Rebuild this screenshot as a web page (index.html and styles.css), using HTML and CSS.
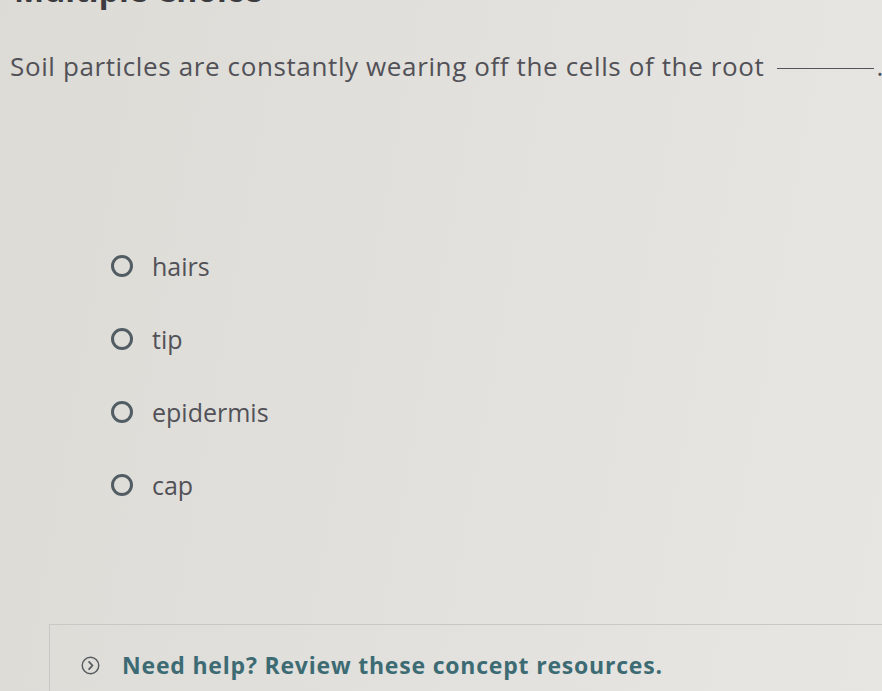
FILE: index.html
```html
<!DOCTYPE html>
<html>
<head>
<meta charset="utf-8">
<link rel="stylesheet" href="styles.css">
</head>
<body>
<div class="page">
  <div class="title">Multiple Choice</div>
  <p class="question">Soil particles are constantly wearing off the cells of the root<span class="blank"></span>.</p>
  <ul class="options">
    <li class="option"><span class="radio"></span><span class="label">hairs</span></li>
    <li class="option"><span class="radio"></span><span class="label">tip</span></li>
    <li class="option"><span class="radio"></span><span class="label">epidermis</span></li>
    <li class="option"><span class="radio"></span><span class="label">cap</span></li>
  </ul>
  <div class="help">
    <svg class="help-icon" viewBox="0 0 20 20" width="19" height="19">
      <circle cx="10" cy="10" r="8.7" fill="none" stroke="#555a5e" stroke-width="1.5"/>
      <path d="M8.5 6.2 L12.1 10 L8.5 13.8" fill="none" stroke="#555a5e" stroke-width="1.9" stroke-linecap="round" stroke-linejoin="round"/>
    </svg>
    <span class="help-text">Need help? Review these concept resources.</span>
  </div>
</div>
</body>
</html>
```
FILE: styles.css
```css
html, body {
  margin: 0;
  padding: 0;
}
body {
  background: #e2e1dd;
  font-family: "Open Sans", "Liberation Sans", sans-serif;
  color: #525157;
  overflow: hidden;
}
.page {
  width: 882px;
  height: 691px;
  position: relative;
  overflow: hidden;
  background: linear-gradient(100deg, #dcdbd6 0%, #e2e1dd 55%, #e7e6e3 100%);
}
.title {
  font-size: 32px;
  font-weight: 700;
  color: #3b3b40;
  margin: -29px 0 0 14px;
  height: 38px;
  line-height: 38px;
}
.question {
  margin: 40px 0 0 10px;
  font-size: 26px;
  line-height: 34px;
  letter-spacing: 0.62px;
  white-space: nowrap;
}
.blank {
  display: inline-block;
  width: 97px;
  border-bottom: 1.5px solid #55545a;
  margin-left: 13px;
  margin-right: 2px;
  vertical-align: 7px;
}
.options {
  list-style: none;
  margin: 0;
  padding: 166px 0 0 111px;
  display: flex;
  flex-direction: column;
  gap: 39px;
}
.option {
  display: flex;
  align-items: center;
  height: 34px;
}
.radio {
  width: 16px;
  height: 16px;
  border: 3px solid #525d63;
  border-radius: 50%;
  margin-right: 19px;
  flex: none;
}
.label {
  font-size: 25px;
  line-height: 34px;
}
.help {
  margin: 122px 0 0 49px;
  border-top: 1.5px solid #c9c8c4;
  border-left: 1.5px solid #c9c8c4;
  height: 80px;
  display: flex;
  align-items: center;
  padding-left: 31px;
  box-sizing: border-box;
}
.help-icon {
  flex: none;
  margin-right: 22px;
  margin-top: 2px;
}
.help-text {
  font-size: 23px;
  font-weight: 700;
  color: #3d6b74;
  letter-spacing: 0.8px;
}
```
